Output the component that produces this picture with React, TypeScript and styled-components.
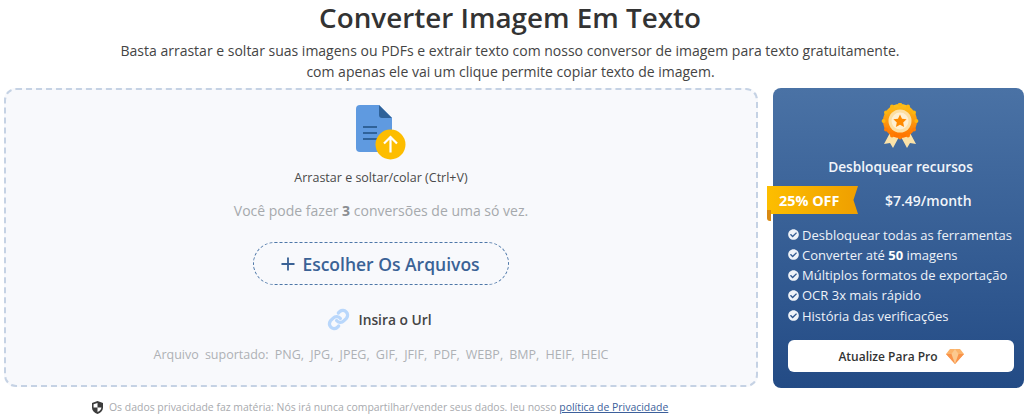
import React from "react";
import styled, { createGlobalStyle } from "styled-components";
import { FaCheckCircle } from "react-icons/fa";
import { LuPlus } from "react-icons/lu";

const GlobalStyle = createGlobalStyle`
  html, body {
    margin: 0;
    padding: 0;
    background: #fff;
    font-family: "Open Sans", "Noto Sans", sans-serif;
    color: #3d3d3d;
    overflow: hidden;
  }
  * { box-sizing: border-box; }
`;

const Page = styled.div`
  width: 1024px;
  height: 420px;
  overflow: hidden;
  display: flex;
  flex-direction: column;
`;

const Title = styled.h1`
  margin: 0;
  height: 37px;
  line-height: 34px;
  font-size: 27.8px;
  font-weight: 600;
  color: #333;
  text-align: center;
  padding-right: 4px;
`;

const Lead = styled.p`
  margin: 4px 0 0;
  height: 47px;
  font-size: 14px;
  line-height: 20.5px;
  color: #444;
  text-align: center;
  padding-right: 4px;
  span { display: block; padding-left: 1px; }
`;

const Columns = styled.div`
  display: flex;
  gap: 15px;
  padding-left: 4px;
`;

const DropZone = styled.div`
  width: 754px;
  height: 299px;
  background: #f8f9fc;
  border: 2px dashed #c5d2e4;
  border-radius: 12px;
  display: flex;
  flex-direction: column;
  align-items: center;
  padding-top: 15px;
`;

const DropLabel = styled.div`
  margin-top: 9px;
  font-size: 12.5px;
  line-height: 18px;
  color: #4a4a4a;
`;

const Limit = styled.div`
  margin-top: 14px;
  font-size: 14px;
  line-height: 20px;
  color: #a6a9ad;
  b { font-weight: 700; color: #8a8d91; }
`;

const ChooseButton = styled.button`
  margin-top: 21px;
  width: 256px;
  height: 43px;
  border: 1px dashed #4d77a8;
  border-radius: 22px;
  background: transparent;
  color: #3a6296;
  font-family: inherit;
  font-size: 17.5px;
  font-weight: 600;
  display: flex;
  align-items: center;
  justify-content: center;
  gap: 4px;
  padding: 0 4px 0 0;
`;

const UrlRow = styled.div`
  margin-top: 21px;
  height: 26px;
  display: flex;
  align-items: center;
  justify-content: center;
  gap: 8px;
  font-size: 13.8px;
  font-weight: 600;
  color: #444;
  padding-right: 3px;
`;

const Formats = styled.div`
  margin-top: 14px;
  font-size: 12.5px;
  line-height: 18px;
  color: #aeb1b5;
  word-spacing: 2.9px;
`;

const ProCard = styled.aside`
  position: relative;
  width: 251px;
  height: 300px;
  border-radius: 8px;
  padding: 15px 11px 0 15px;
  background: linear-gradient(180deg, #4a72a5 0%, #234b85 100%);
  color: #fff;
  display: flex;
  flex-direction: column;
`;

const Medal = styled.div`
  display: flex;
  justify-content: center;
  height: 47px;
  padding-right: 1px;
`;

const ProTitle = styled.div`
  margin-top: 7px;
  font-size: 13.7px;
  line-height: 20px;
  font-weight: 600;
  text-align: center;
  color: #f2f5fa;
`;

const Price = styled.div`
  margin-top: 14px;
  height: 20px;
  font-size: 14px;
  line-height: 20px;
  font-weight: 600;
  padding-left: 97px;
  color: #f2f5fa;
`;

const Ribbon = styled.div`
  position: absolute;
  left: -6px;
  top: 98px;
  width: 91px;
  height: 28px;
  padding-left: 12px;
  font-size: 14.4px;
  font-weight: 700;
  line-height: 29px;
  color: #fff;
  background: linear-gradient(90deg, #fdbe00, #ef9f00);
  clip-path: polygon(0 0, 100% 0, 95% 50%, 100% 100%, 0 100%);
`;

const RibbonFold = styled.div`
  position: absolute;
  left: -6px;
  top: 122px;
  width: 4px;
  height: 11px;
  background: #d98a12;
  border-radius: 0 0 0 3px;
`;

const Features = styled.ul`
  list-style: none;
  margin: 13.5px 0 0;
  padding: 0;
  display: flex;
  flex-direction: column;
`;

const Feature = styled.li`
  height: 20.25px;
  display: flex;
  align-items: center;
  gap: 3px;
  font-size: 13px;
  line-height: 20px;
  color: #eef2f8;
  white-space: pre;
  b { font-weight: 700; color: #fff; }
  svg { flex: none; color: #eef2f8; }
`;

const UpgradeButton = styled.button`
  margin-top: 14.5px;
  width: 226px;
  height: 32px;
  border: none;
  border-radius: 6px;
  background: #fff;
  color: #333;
  font-family: inherit;
  font-size: 12px;
  font-weight: 600;
  display: flex;
  align-items: center;
  justify-content: center;
  gap: 8px;
  padding: 0;
`;

const Privacy = styled.div`
  margin-top: 11px;
  display: flex;
  align-items: center;
  gap: 6px;
  padding-left: 92px;
  font-size: 10.45px;
  line-height: 16px;
  color: #a8aaae;
  a { color: #3c5f9b; text-decoration: underline; }
`;

const FileIcon = () => (
  <svg width="50" height="55" viewBox="0 0 50 55">
    <path d="M4 0H23L36 13V43a4 4 0 0 1-4 4H4a4 4 0 0 1-4-4V4a4 4 0 0 1 4-4Z" fill="#5f9ae0" />
    <path d="M23 0L36 13H26a3 3 0 0 1-3-3Z" fill="#2f6299" />
    <path d="M7 22H21M7 28H21M7 34H21" stroke="#2f6299" strokeWidth="2" />
    <circle cx="34.500" cy="39.500" r="15" fill="#fdbd00" />
    <path d="M34.500 47.500V32M28 38.500L34.500 32L41 38.500" stroke="#fff" strokeWidth="2.200" fill="none" />
  </svg>
);

const LinkIcon = () => (
  <svg width="23" height="23" viewBox="0 0 24 24" fill="none" stroke="#b9d7fb" strokeWidth="3.400" strokeLinecap="round" strokeLinejoin="round">
    <path d="M10 13a5 5 0 0 0 7.500.5l3-3a5 5 0 0 0-7-7l-1.700 1.700" />
    <path d="M14 11a5 5 0 0 0-7.500-.5l-3 3a5 5 0 0 0 7 7l1.700-1.700" />
  </svg>
);

const MedalIcon = () => (
  <svg width="38" height="46" viewBox="0 0 38 46">
    <defs>
      <linearGradient id="medalFill" x1="0" y1="0" x2="0" y2="1">
        <stop offset="0" stopColor="#fdc21a" />
        <stop offset="1" stopColor="#ff6f00" />
      </linearGradient>
    </defs>
    <path d="M10 28L3 41L9 40L12 45L19 32Z" fill="#fbe2a8" />
    <path d="M28 28L35 41L29 40L26 45L19 32Z" fill="#fbe2a8" />
    <circle cx="19" cy="18" r="17" fill="url(#medalFill)" />
    <g fill="#fdb60f">
      <circle cx="19" cy="1.500" r="2" />
      <circle cx="27" cy="3.600" r="2" />
      <circle cx="33" cy="9.600" r="2" />
      <circle cx="35.400" cy="18" r="2" />
      <circle cx="5" cy="9.600" r="2" />
      <circle cx="2.600" cy="18" r="2" />
      <circle cx="11" cy="3.600" r="2" />
    </g>
    <g fill="#ff7d04">
      <circle cx="33" cy="26.400" r="2" />
      <circle cx="27" cy="32.400" r="2" />
      <circle cx="19" cy="34.600" r="2" />
      <circle cx="11" cy="32.400" r="2" />
      <circle cx="5" cy="26.400" r="2" />
    </g>
    <circle cx="19" cy="18" r="11.500" fill="#fcdfa4" />
    <circle cx="19" cy="18" r="8.500" fill="#fff0d2" />
    <path d="M19 11.500l2 4.200 4.600.6-3.400 3.100.9 4.600-4.100-2.300-4.100 2.300.9-4.600-3.400-3.100 4.600-.6Z" fill="#ff8a00" />
  </svg>
);

const GemIcon = () => (
  <svg width="18" height="15" viewBox="0 0 18 15">
    <path d="M4 0H14L18 5L9 15L0 5Z" fill="#fbb36a" />
    <path d="M0 5H18L9 15Z" fill="#f9934a" />
    <path d="M5.500 5L9 15L12.500 5L9 0Z" fill="#fcc98f" />
  </svg>
);

const ShieldIcon = () => (
  <svg width="11" height="13" viewBox="0 0 12 14">
    <path d="M6 0L12 2.200V7c0 3.400-2.500 5.800-6 7C2.500 12.800 0 10.400 0 7V2.200Z" fill="#3c3c3c" />
    <path d="M6 2V7H10.300C10 9.400 8.400 11 6 12V7H1.700V3.500Z" fill="#fff" />
  </svg>
);

const features = [
  <>Desbloquear todas as ferramentas</>,
  <>Converter até <b>50</b> imagens</>,
  <>Múltiplos formatos de exportação</>,
  <>OCR 3x mais rápido</>,
  <>História das verificações</>,
];

export default function App() {
  return (
    <Page>
      <GlobalStyle />
      <Title>Converter Imagem Em Texto</Title>
      <Lead>
        Basta arrastar e soltar suas imagens ou PDFs e extrair texto com nosso conversor de imagem para texto gratuitamente.
        <span>com apenas ele vai um clique permite copiar texto de imagem.</span>
      </Lead>
      <Columns>
        <DropZone>
          <FileIcon />
          <DropLabel>Arrastar e soltar/colar (Ctrl+V)</DropLabel>
          <Limit>Você pode fazer <b>3</b> conversões de uma só vez.</Limit>
          <ChooseButton>
            <LuPlus size={20} strokeWidth={2.2} />
            Escolher Os Arquivos
          </ChooseButton>
          <UrlRow>
            <LinkIcon />
            Insira o Url
          </UrlRow>
          <Formats>Arquivo suportado:  PNG, JPG, JPEG, GIF, JFIF, PDF, WEBP, BMP, HEIF, HEIC</Formats>
        </DropZone>
        <ProCard>
          <Medal><MedalIcon /></Medal>
          <ProTitle>Desbloquear recursos</ProTitle>
          <Ribbon>25% OFF</Ribbon>
          <RibbonFold />
          <Price>$7.49/month</Price>
          <Features>
            {features.map((item, i) => (
              <Feature key={i}>
                <FaCheckCircle size={11} />
                <span>{item}</span>
              </Feature>
            ))}
          </Features>
          <UpgradeButton>
            Atualize Para Pro
            <GemIcon />
          </UpgradeButton>
        </ProCard>
      </Columns>
      <Privacy>
        <ShieldIcon />
        <span>Os dados privacidade faz matéria: Nós irá nunca compartilhar/vender seus dados. leu nosso <a href="#">política de Privacidade</a></span>
      </Privacy>
    </Page>
  );
}
